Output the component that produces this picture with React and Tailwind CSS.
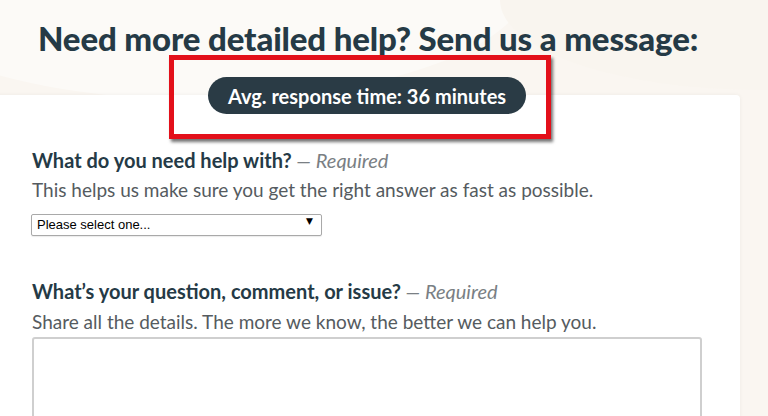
import React from "react";

export default function App() {
  return (
    <div className="relative w-[768px] h-[416px] overflow-hidden bg-[#faf6f1]" style={{ fontFamily: "Lato, 'Open Sans', sans-serif" }}>
      <svg className="absolute inset-0" width="768" height="416" viewBox="0 0 768 416">
        <ellipse cx="200" cy="-20" rx="330" ry="120" fill="#fcfaf7" />
        <ellipse cx="760" cy="0" rx="260" ry="90" fill="#f9f5ef" />
      </svg>
      <div className="relative flex pl-[38px]">
        <h1 className="mt-[20px] text-[33px] leading-[36px] font-black tracking-[-0.15px] text-[#253a46] whitespace-nowrap">
          Need more detailed help? Send us a message:
        </h1>
      </div>
      <div className="relative flow-root mt-[39px] ml-[-10px] w-[750px] h-[400px] bg-white rounded-tr-[4px] shadow-[0_0_4px_rgba(0,0,0,0.05)]">
        <div className="flex justify-center pl-[4px] -mt-[18px]">
          <div className="h-[37px] w-[318px] rounded-full bg-[#2a3b45] flex items-center justify-center text-white text-[20px] font-bold">
            Avg. response time: 36 minutes
          </div>
        </div>
        <div className="pl-[42px] pr-[38px]">
          <div className="mt-[34px] text-[20px] leading-[24px] text-[#253a46] whitespace-nowrap">
            <span className="font-bold">What do you need help with?</span>
            <span className="italic text-[#7a7f84]"> — Required</span>
          </div>
          <p className="mt-[7px] text-[19px] leading-[22px] text-[#555b60] whitespace-nowrap">
            This helps us make sure you get the right answer as fast as possible.
          </p>
          <div className="relative mt-[10px] w-[291px] h-[22px] -ml-[1px]">
            <select className="appearance-none w-full h-full border border-[#a9a9a9] rounded-[2px] bg-white pl-[5px] text-[13px] text-black shadow-[0_1px_1px_rgba(0,0,0,0.08)]" style={{ fontFamily: "'Liberation Sans', Arial, sans-serif" }}>
              <option>Please select one...</option>
            </select>
            <span className="pointer-events-none absolute right-[9px] top-[4px] text-[9px] text-black" style={{ fontFamily: "'DejaVu Sans', sans-serif" }}>▼</span>
          </div>
          <div className="mt-[46px] text-[20px] leading-[24px] text-[#253a46] whitespace-nowrap">
            <span className="font-bold">What’s your question, comment, or issue?</span>
            <span className="italic text-[#7a7f84]"> — Required</span>
          </div>
          <p className="mt-[8px] text-[19px] leading-[22px] text-[#555b60] whitespace-nowrap">
            Share all the details. The more we know, the better we can help you.
          </p>
          <div className="mt-[4px] w-[670px] h-[120px] border-2 border-[#cfcfcf] rounded-[3px]" />
        </div>
      </div>
      <div className="absolute left-[169px] top-[55px] w-[382px] h-[84px] border-[5px] border-[#e3101a] shadow-[2px_3px_3px_rgba(0,0,0,0.55)]" />
    </div>
  );
}
